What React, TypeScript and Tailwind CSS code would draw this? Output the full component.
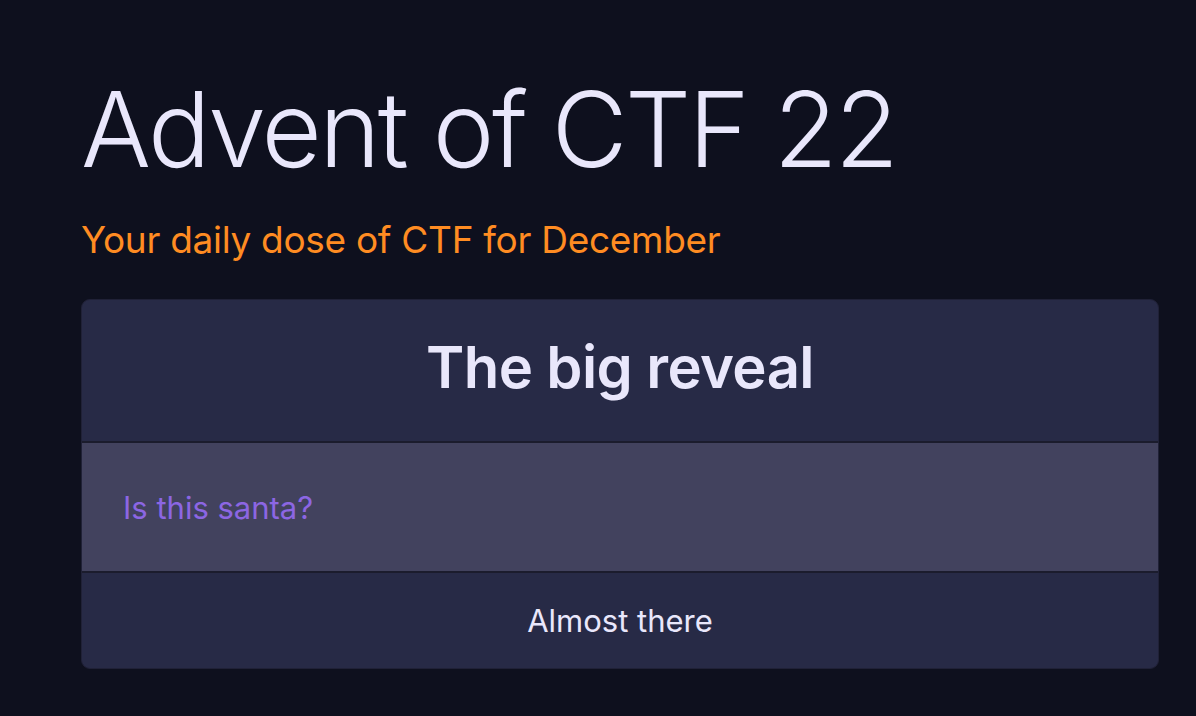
import React from 'react';

export default function App() {
    return (
        <div className="min-h-screen bg-[#0e101e] px-[81px] pt-[77px] text-[#e9e7fb]" style={{ fontFamily: 'Inter, "Noto Sans", sans-serif' }}>
            <h1 className="text-[104px] font-light leading-none tracking-[-2.6px]">Advent of CTF 22</h1>
            <p className="mt-[40px] text-[37px] leading-none tracking-[-0.3px] text-[#ff8c22]">Your daily dose of CTF for December</p>
            <div className="mt-[41px] w-[1078px] overflow-hidden rounded-[9px] border border-[#202137] bg-[#272a46]">
                <div className="flex h-[143px] items-center justify-center border-b-2 border-[#1b1c2d]">
                    <h2 className="mb-[8px] text-[58px] font-semibold leading-none tracking-[-0.6px]">The big reveal</h2>
                </div>
                <div className="flex h-[130px] items-center border-b-2 border-[#1b1c2d] bg-[#42425e] px-[41px]">
                    <span className="text-[31px] leading-none text-[#8c66e3]">Is this santa?</span>
                </div>
                <div className="flex h-[95px] items-center justify-center">
                    <span className="text-[31px] leading-none">Almost there</span>
                </div>
            </div>
        </div>
    );
}
